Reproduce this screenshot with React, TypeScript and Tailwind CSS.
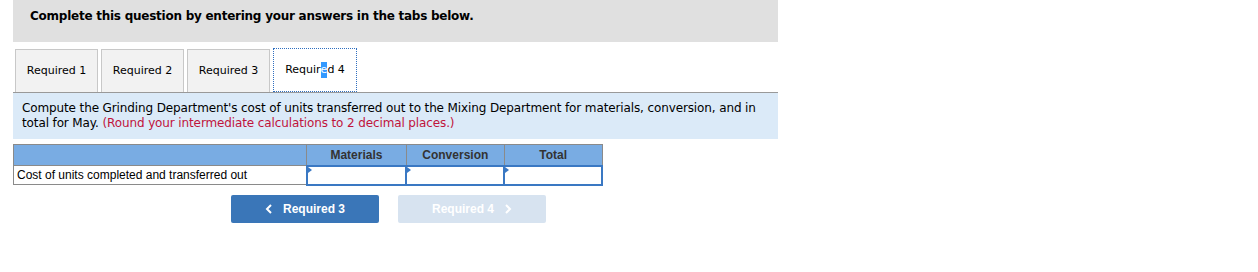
import React from "react";

const tabs = ["Required 1", "Required 2", "Required 3", "Required 4"];

function InputCell() {
  return (
    <td className="relative h-[19px] border-2 border-[#3a78c3] bg-white p-0">
      <span className="absolute left-0 top-0 h-0 w-0 border-y-[3px] border-l-[4px] border-y-transparent border-l-[#3a78c3]" />
    </td>
  );
}

export default function App() {
  return (
    <div className="w-[1258px] h-[272px] bg-white">
      <div className="ml-[13px] w-[765px]">
        <div className="h-[42px] bg-[#e0e0e0] pl-[17px] pt-[8px]">
          <p className="font-['DejaVu_Sans',sans-serif] text-[12px] font-bold leading-[16px] tracking-[-0.25px] text-black">
            Complete this question by entering your answers in the tabs below.
          </p>
        </div>
        <div className="mt-[7px] flex h-[44px] items-end gap-[3px] border-b border-[#999999] pl-[2px]">
          {tabs.map((t, i) =>
            i === 3 ? (
              <div
                key={t}
                className="flex h-[44px] w-[84px] items-center justify-center border border-dotted border-[#2f6fc0] bg-white font-['DejaVu_Sans',sans-serif] text-[11px] text-black"
              >
                Requir<span className="bg-[#3399ff] text-white">e</span>d 4
              </div>
            ) : (
              <div
                key={t}
                className="flex h-[43px] w-[83px] items-center justify-center border border-b-0 border-[#c8c8c8] bg-[#f2f2f2] font-['DejaVu_Sans',sans-serif] text-[11px] text-black"
              >
                {t}
              </div>
            )
          )}
        </div>
        <div className="h-[46px] bg-[#dbeaf8] pl-[9px] pr-[4px] pt-[8px] font-['DejaVu_Sans',sans-serif] text-[12px] leading-[15px] tracking-[-0.12px] text-black">
          Compute the Grinding Department's cost of units transferred out to the Mixing Department for materials, conversion, and in total for May.{" "}
          <span className="text-[#c0143c]">(Round your intermediate calculations to 2 decimal places.)</span>
        </div>
        <table className="mt-[5px] w-[590px] border-collapse font-['Liberation_Sans',Arial,sans-serif] text-[12px]">
          <thead>
            <tr className="h-[21px] bg-[#79ace3]">
              <th className="w-[294px] border border-[#8a8a8a] p-0"></th>
              <th className="w-[100px] border border-[#8a8a8a] p-0 font-bold text-[#333333]">Materials</th>
              <th className="w-[98px] border border-[#8a8a8a] p-0 font-bold text-[#333333]">Conversion</th>
              <th className="w-[98px] border border-[#8a8a8a] p-0 font-bold text-[#333333]">Total</th>
            </tr>
          </thead>
          <tbody>
            <tr className="h-[19px]">
              <td className="border border-[#8a8a8a] px-[3px] py-0 leading-[14px] text-black">Cost of units completed and transferred out</td>
              <InputCell />
              <InputCell />
              <InputCell />
            </tr>
          </tbody>
        </table>
        <div className="mt-[9px] flex gap-[19px] pl-[218px] font-['Liberation_Sans',Arial,sans-serif] text-[12px] font-bold">
          <button className="flex h-[28px] w-[148px] items-center justify-center gap-[10px] rounded-[2px] bg-[#3a76b8] text-white">
            <svg width="8" height="10" viewBox="0 0 8 10"><path d="M6 1 L2 5 L6 9" stroke="white" strokeWidth="2" fill="none" /></svg>
            Required 3
          </button>
          <button className="flex h-[28px] w-[148px] items-center justify-center gap-[10px] rounded-[2px] bg-[#d7e3f0] text-white">
            Required 4
            <svg width="8" height="10" viewBox="0 0 8 10"><path d="M2 1 L6 5 L2 9" stroke="white" strokeWidth="2" fill="none" /></svg>
          </button>
        </div>
      </div>
    </div>
  );
}
